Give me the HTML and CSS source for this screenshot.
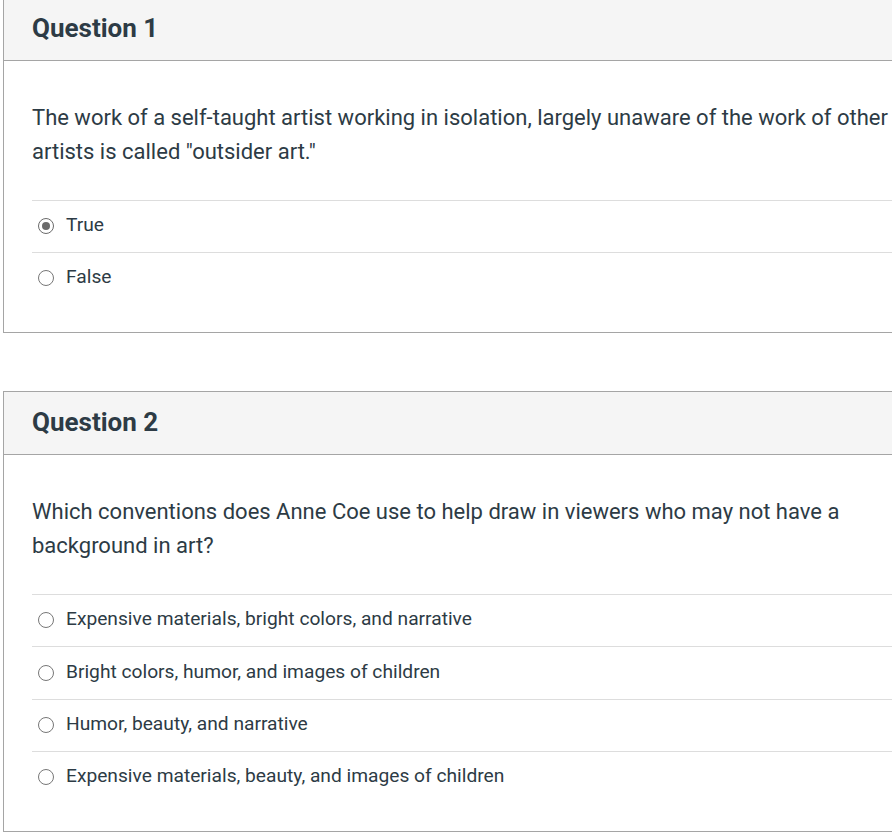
FILE: index.html
```html
<!DOCTYPE html>
<html>
<head>
<meta charset="utf-8">
<link rel="stylesheet" href="styles.css">
</head>
<body>
<div class="quiz">
  <div class="card first">
    <div class="card-header"><h2 class="title">Question 1</h2></div>
    <div class="card-body">
      <p class="question">The work of a self-taught artist working in isolation, largely unaware of the work of other artists is called "outsider art."</p>
      <div class="answers">
        <div class="answer"><span class="radio checked"></span><span class="label">True</span></div>
        <div class="answer"><span class="radio"></span><span class="label">False</span></div>
      </div>
    </div>
  </div>
  <div class="card second">
    <div class="card-header"><h2 class="title">Question 2</h2></div>
    <div class="card-body">
      <p class="question">Which conventions does Anne Coe use to help draw in viewers who may not have a background in art?</p>
      <div class="answers">
        <div class="answer"><span class="radio"></span><span class="label">Expensive materials, bright colors, and narrative</span></div>
        <div class="answer"><span class="radio"></span><span class="label">Bright colors, humor, and images of children</span></div>
        <div class="answer"><span class="radio"></span><span class="label">Humor, beauty, and narrative</span></div>
        <div class="answer"><span class="radio"></span><span class="label">Expensive materials, beauty, and images of children</span></div>
      </div>
    </div>
  </div>
</div>
</body>
</html>
```
FILE: styles.css
```css
html, body {
  margin: 0;
  padding: 0;
  background: #ffffff;
}
body {
  font-family: Roboto, "Liberation Sans", Arial, sans-serif;
  color: #2d3b45;
}
.quiz {
  width: 892px;
  height: 832px;
  overflow: hidden;
  box-sizing: border-box;
  padding-left: 3px;
}
.card {
  border: 1px solid #a5a5a5;
  background: #ffffff;
  width: 950px;
}
.card.first {
  margin-top: -3px;
}
.card.second {
  margin-top: 58px;
}
.card-header {
  height: 62px;
  background: #f5f5f5;
  border-bottom: 1px solid #a5a5a5;
  padding: 0 28px;
  display: flex;
  align-items: center;
}
.title {
  margin: 0 0 2px 0;
  font-size: 26px;
  font-weight: 700;
  color: #2d3b45;
}
.card-body {
  padding: 40px 28px 28px 28px;
}
.question {
  margin: 0 0 31px 0;
  font-size: 22px;
  line-height: 34px;
  width: 860px;
}
.answer {
  height: 52px;
  box-sizing: border-box;
  border-top: 1px solid #dddddd;
  display: flex;
  align-items: center;
  padding-left: 6px;
}
.second .answer:nth-child(2) {
  height: 53px;
}
.radio {
  width: 16px;
  height: 16px;
  box-sizing: border-box;
  border: 1px solid #777777;
  border-radius: 50%;
  display: flex;
  align-items: center;
  justify-content: center;
  margin-right: 12px;
  margin-bottom: 1px;
  flex: none;
}
.radio.checked {
  border-color: #6b6b6b;
}
.radio.checked::after {
  content: "";
  width: 8px;
  height: 8px;
  border-radius: 50%;
  background: #6b6b6b;
}
.label {
  font-size: 19.2px;
  line-height: 24px;
  margin-bottom: 3px;
  color: #2d3b45;
}
```
